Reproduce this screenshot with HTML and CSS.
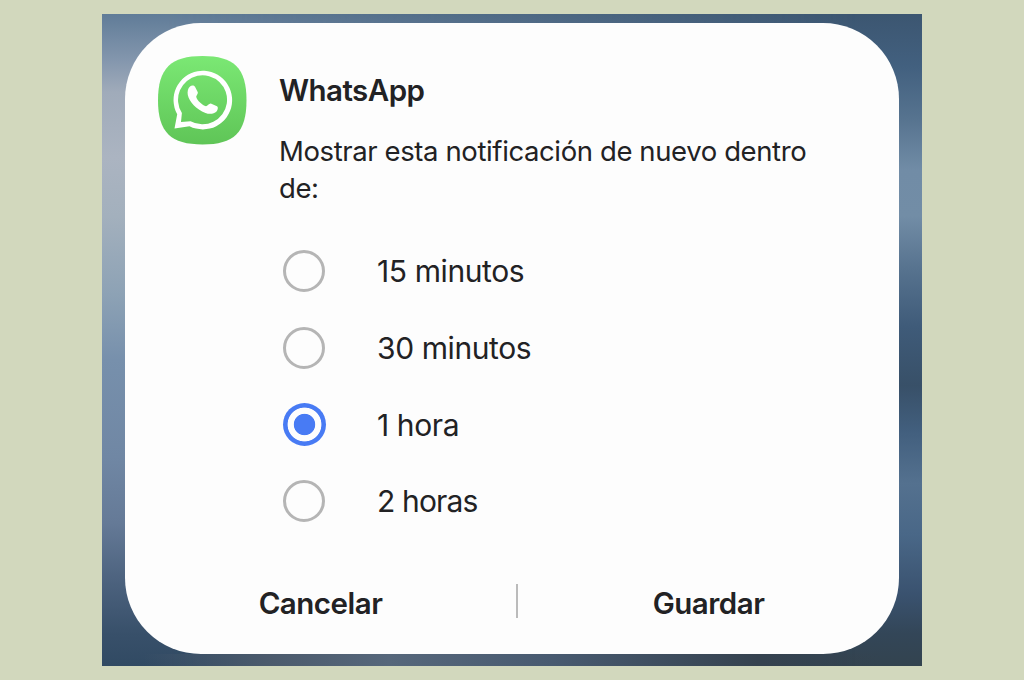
FILE: index.html
```html
<!DOCTYPE html>
<html lang="es">
<head>
<meta charset="utf-8">
<title>WhatsApp</title>
<link rel="stylesheet" href="styles.css">
</head>
<body>
<main class="wallpaper">
  <section class="dialog">
    <div class="content">
      <svg class="app-icon" viewBox="0 0 89 89" aria-hidden="true">
        <defs><linearGradient id="green" x1="0" y1="0" x2="0" y2="1"><stop offset="0" stop-color="#7be874"/><stop offset="1" stop-color="#5fc557"/></linearGradient></defs>
        <path fill="url(#green)" d="M44.500 0C76 0 88.500 12 88.500 44.300S76 88.500 44.500 88.500 0 76.500 0 44.300 13 0 44.500 0Z"/>
        <path fill="#fff" fill-rule="evenodd" d="M16.500 72.500 19.200 58.300A29.300 29.300 0 1 1 31.500 70.200ZM23 66 32.600 65.200A24.500 24.500 0 1 0 23.900 57Z"/>
        <path fill="#fff" d="M32 30.500C33.500 29.300 36 29.200 37 30.800L39.800 36.200C40.300 37.500 38.300 39.500 38.200 40.800 39 44.500 44.500 49.500 48 50.200 49.500 49.800 51 47.200 52.800 47.400L59 50.200C60.500 51.200 59.700 54 58.500 55.500 56 58 51.500 58.500 47.500 57 38 53.200 31.500 46 29.800 39 29.200 35.500 30 32.300 32 30.500Z"/>
      </svg>
      <div class="body">
        <h1 class="title">WhatsApp</h1>
        <p class="message">Mostrar esta notificación de nuevo dentro<br>de:</p>
        <div class="options">
          <label class="option"><span class="radio"></span><span>15 minutos</span></label>
          <label class="option"><span class="radio"></span><span>30 minutos</span></label>
          <label class="option"><span class="radio selected"></span><span>1 hora</span></label>
          <label class="option"><span class="radio"></span><span class="tight">2 horas</span></label>
        </div>
      </div>
    </div>
    <footer class="actions">
      <button class="action cancel">Cancelar</button>
      <span class="divider"></span>
      <button class="action save">Guardar</button>
    </footer>
  </section>
</main>
</body>
</html>
```
FILE: styles.css
```css
* { box-sizing: border-box; }
body {
  margin: 0;
  height: 680px;
  padding: 14px 102px 0;
  overflow: hidden;
  background: #d2d8bd;
  color: #222224;
  font-family: Inter, "Liberation Sans", sans-serif;
}
.wallpaper {
  height: 651.5px;
  width: 819.5px;
  padding: 9px 23px 0;
  position: relative;
  isolation: isolate;
  background: linear-gradient(180deg, #3c5671 0, #42607f 8%, #56738f 16%, #718ca6 24%, #728da6 31%, #57738f 39%, #3f5b79 48%, #385068 57%, #425f7e 64%, #54718f 72%, #496787 80%, #3a526f 89%, #334658 95%, #33434f 100%);
}
.wallpaper::before {
  content: "";
  position: absolute;
  inset: 0;
  z-index: -1;
  background: linear-gradient(180deg, #607c98 0, #8396ad 7%, #a0abba 12%, #abb4c1 22%, #a3b0bd 31%, #8da2b5 43%, #7790ac 53%, #7087a4 68%, #657a97 78%, #4c627e 87%, #38506a 95%, #314a63 100%);
  mask-image: linear-gradient(90deg, #000 8%, transparent 92%);
}
.wallpaper::after {
  content: "";
  position: absolute;
  inset: auto 0 0;
  z-index: -1;
  height: 12px;
  background: linear-gradient(90deg, transparent 5%, #4b5a6c 20%, #56677b 35%, #485a70 55%, #35424f 80%, transparent 95%);
}
.dialog {
  width: 774px;
  height: 631px;
  border-radius: 76px;
  background: #fdfdfd;
}
.content { display: flex; height: 545px; padding: 33px 33px 0; gap: 32px; }
.app-icon { width: 89px; height: 89px; flex: none; }
.body { flex: 1; padding-top: 15px; white-space: nowrap; }
.title { margin: 0; font-size: 29.5px; font-weight: 600; line-height: 38px; letter-spacing: -.55px; }
.message { margin: 24px 0 0; font-size: 27.5px; line-height: 37px; letter-spacing: -.39px; }
.options { padding: 26px 0 0 4px; }
.option { display: flex; align-items: center; gap: 52px; height: 76.7px; font-size: 30px; letter-spacing: -.4px; }
.tight { letter-spacing: -.85px; }
.radio { width: 42px; height: 42px; flex: none; border: 3px solid #b5b5b5; border-radius: 50%; }
.radio.selected { width: 43px; height: 43px; margin: 0 -.5px; border: 0; background: radial-gradient(circle closest-side, #487bf4 10.3px, transparent 11.1px, transparent 16.5px, #487bf4 17.3px); }
.actions { display: flex; align-items: center; height: 66px; }
.action { border: 0; padding: 3px 0 0; background: none; color: inherit; font: 600 29.5px/38px Inter, "Liberation Sans", sans-serif; letter-spacing: -.5px; }
.cancel { width: 391px; }
.save { width: 381px; }
.divider { width: 2px; height: 34px; background: #bbb; }
```
